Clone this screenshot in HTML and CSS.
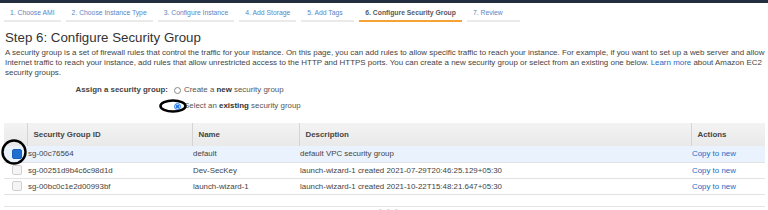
FILE: index.html
```html
<!DOCTYPE html>
<html>
<head>
<meta charset="utf-8">
<link rel="stylesheet" href="styles.css">
</head>
<body>
<div class="topbar"></div>
<nav class="tabs">
  <a class="tab">1. Choose AMI</a>
  <a class="tab">2. Choose Instance Type</a>
  <a class="tab">3. Configure Instance</a>
  <a class="tab">4. Add Storage</a>
  <a class="tab">5. Add Tags</a>
  <a class="tab active">6. Configure Security Group</a>
  <a class="tab">7. Review</a>
</nav>
<main class="content">
  <h1 class="title">Step 6: Configure Security Group</h1>
  <p class="intro">A security group is a set of firewall rules that control the traffic for your instance. On this page, you can add rules to allow specific traffic to reach your instance. For example, if you want to set up a web server and allow Internet traffic to reach your instance, add rules that allow unrestricted access to the HTTP and HTTPS ports. You can create a new security group or select from an existing one below. <a class="link">Learn more</a> about Amazon EC2 security groups.</p>
  <div class="assign">
    <div class="assign-label">Assign a security group:</div>
    <div class="options">
      <label class="option"><span class="radio"></span><span>Create a <b>new</b> security group</span></label>
      <label class="option"><span class="radio checked"></span><span>Select an <b>existing</b> security group</span></label>
    </div>
  </div>
  <div class="grid-wrap">
    <table class="grid">
      <thead>
        <tr>
          <th class="c-check"></th>
          <th class="c-id">Security Group ID</th>
          <th class="c-name">Name</th>
          <th class="c-desc">Description</th>
          <th class="c-act">Actions</th>
        </tr>
      </thead>
      <tbody>
        <tr class="selected">
          <td class="c-check"><span class="cb on"></span></td>
          <td>sg-00c76564</td>
          <td>default</td>
          <td>default VPC security group</td>
          <td><a class="link">Copy to new</a></td>
        </tr>
        <tr>
          <td class="c-check"><span class="cb"></span></td>
          <td>sg-00251d9b4c6c98d1d</td>
          <td>Dev-SecKey</td>
          <td>launch-wizard-1 created 2021-07-29T20:46:25.129+05:30</td>
          <td><a class="link">Copy to new</a></td>
        </tr>
        <tr>
          <td class="c-check"><span class="cb"></span></td>
          <td>sg-00bc0c1e2d00993bf</td>
          <td>launch-wizard-1</td>
          <td>launch-wizard-1 created 2021-10-22T15:48:21.647+05:30</td>
          <td><a class="link">Copy to new</a></td>
        </tr>
      </tbody>
    </table>
  </div>
  <div class="handle"><span></span><span></span><span></span></div>
</main>
<svg class="mark mark-radio" width="30" height="16" viewBox="0 0 30 16"><ellipse cx="15" cy="8" rx="12.5" ry="5.5" fill="none" stroke="#000" stroke-width="2.6"/></svg>
<svg class="mark mark-check" width="28" height="28" viewBox="0 0 28 28"><circle cx="14" cy="14" r="11.5" fill="none" stroke="#000" stroke-width="2.4"/></svg>
</body>
</html>
```

FILE: styles.css
```css
* { box-sizing: border-box; }
html, body { margin: 0; padding: 0; background: #fff; }
body {
  font-family: "Liberation Sans", Arial, sans-serif;
  color: #444;
  width: 768px;
  height: 210px;
  overflow: hidden;
  position: relative;
}
.topbar { height: 3px; background: #232f3e; }

.tabs {
  display: flex;
  gap: 5px;
  padding-left: 4px;
}
.tab {
  display: block;
  min-width: 53px;
  padding: 5px 6px 3px 6px;
  font-size: 6.8px;
  line-height: 9px;
  color: #5b86c4;
  border-bottom: 2px solid #eaeaea;
  white-space: nowrap;
}
.tab.active {
  color: #545b64;
  font-weight: bold;
  border-bottom-color: #f7a234;
}

.content { padding: 0 3px 0 4px; }
.title {
  margin: 8px 0 0 1px;
  font-size: 13.3px;
  line-height: 15px;
  font-weight: normal;
  color: #333;
}
.intro {
  margin: 3px 0 0 1px;
  font-size: 7.95px;
  line-height: 10px;
  color: #444;
}
.link { color: #1a6bc4; text-decoration: none; }

.assign {
  display: grid;
  grid-template-columns: 164px auto;
  column-gap: 6px;
  margin-top: 4px;
  font-size: 7.9px;
  line-height: 16px;
}
.assign-label {
  text-align: right;
  font-weight: bold;
  color: #444;
}
.options { display: flex; flex-direction: column; }
.option { display: flex; align-items: center; gap: 3px; color: #555; }
.option b { color: #333; }
.radio {
  width: 7px; height: 7px;
  border-radius: 50%;
  border: 1px solid #888;
  background: #fff;
}
.radio.checked {
  border-color: #2b7de9;
  background: radial-gradient(circle, #2b7de9 0 45%, #bcd6f8 55%);
}

.grid-wrap {
  margin-top: 9px;
  height: 84px;
  border-bottom: 1px solid #e3e3e3;
}
.grid {
  width: 761px;
  border-collapse: collapse;
  font-size: 7.9px;
  table-layout: fixed;
}
.grid th {
  height: 23px;
  text-align: left;
  font-weight: bold;
  color: #444;
  padding: 0 0 0 6px;
  background: linear-gradient(#f3f3f3, #e9e9e9);
  border-left: 1px solid #d4d4d4;
}
.grid th.c-check { border-left: none; }
.grid td {
  height: 16px;
  padding: 0 0 0 1px;
  border-bottom: 1px solid #e2e2e2;
  color: #444;
  white-space: nowrap;
}
.c-check { width: 23px; }
.c-id { width: 165px; }
.c-name { width: 107px; }
.c-desc { width: 392px; }
.c-act { width: 74px; }
.grid td.c-check { padding-left: 8px; }
.grid tr.selected td { background: #eaf2fd; }
.cb {
  display: block;
  width: 10px; height: 10px;
  border: 1px solid #d0d0d0;
  border-radius: 2px;
  background: #f4f4f4;
}
.cb.on { background: #1f6fd0; border-color: #1a5fb8; }

.handle {
  display: flex;
  justify-content: center;
  gap: 5px;
  margin-top: 2px;
  padding-left: 8px;
}
.handle span { width: 3px; height: 3px; border-radius: 50%; background: #d6d6d6; }

.mark { position: absolute; }
.mark-radio { left: 158px; top: 98px; }
.mark-check { left: 0; top: 138px; }
```
